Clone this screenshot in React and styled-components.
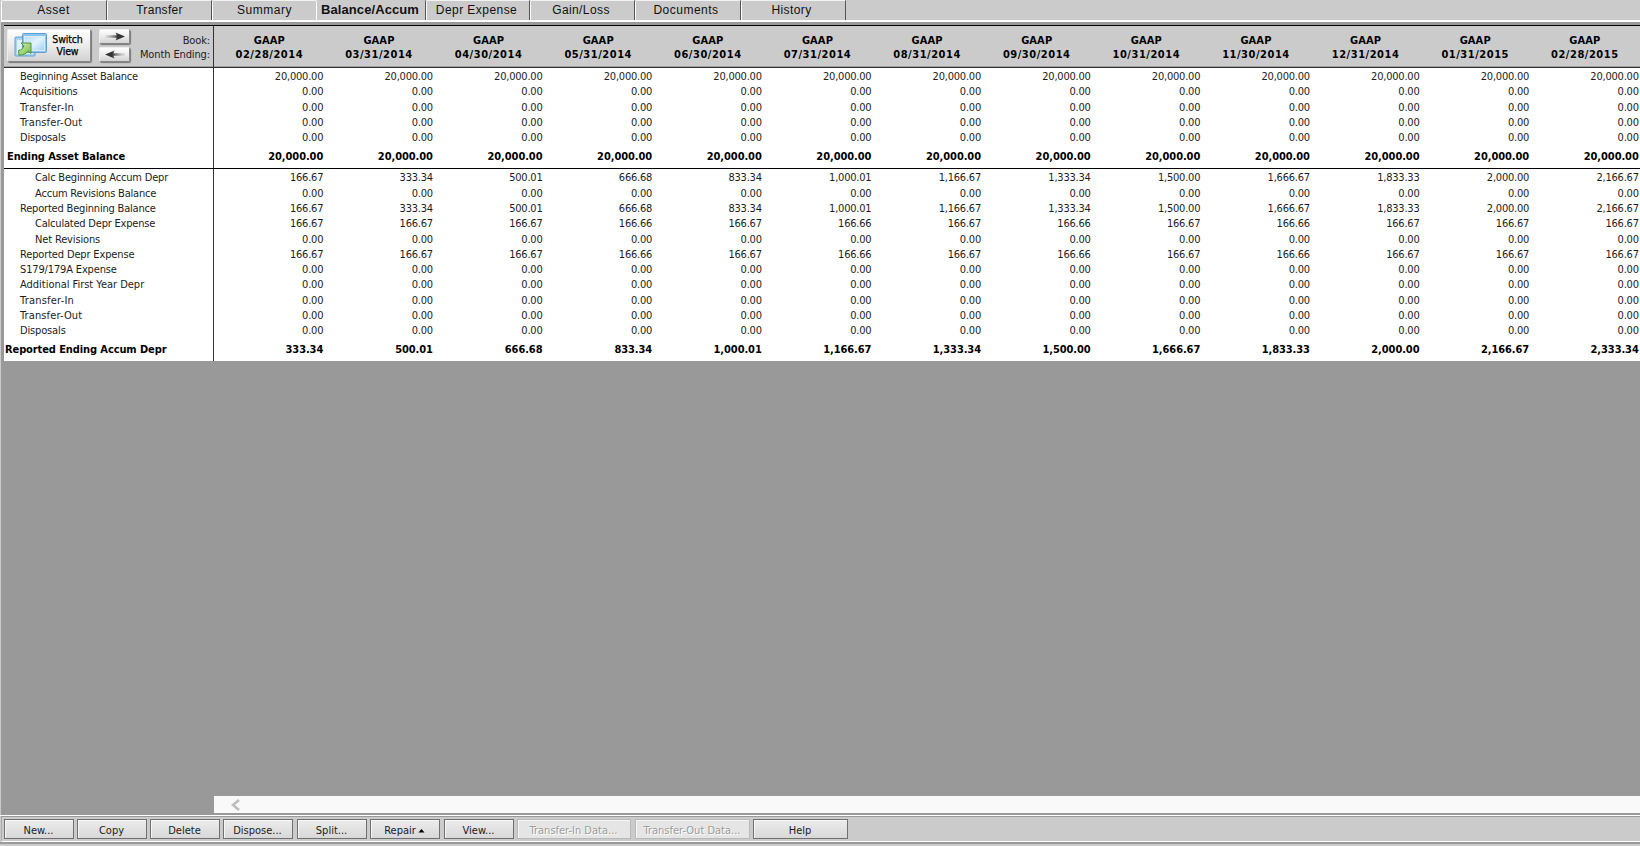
import React from 'react';
import styled, { createGlobalStyle, css } from 'styled-components';

const Global = createGlobalStyle`
  *, *::before, *::after { box-sizing: border-box; }
  html, body { margin: 0; padding: 0; overflow: hidden; background: #ccc; }
`;

const uiFont = css`
  font-family: 'DejaVu Sans Condensed', 'DejaVu Sans', sans-serif;
  font-stretch: 75%;
`;

const Window = styled.div`
  ${uiFont}
  width: 1640px;
  height: 846px;
  display: flex;
  flex-direction: column;
  background: #cbcbcb;
  color: #111;
  font-size: 11px;
  overflow: hidden;
`;

const TabBar = styled.nav`
  display: flex;
  height: 20px;
  flex: none;
  padding-left: 1px;
`;

const Tab = styled.div`
  width: ${(p) => p.$width}px;
  height: 20px;
  flex: none;
  padding-right: ${(p) => p.$inset}px;
  border-left: 1px solid #fff;
  border-top: 1px solid ${(p) => (p.$active ? '#cbcbcb' : '#f2f2f2')};
  border-right: ${(p) => (p.$beforeActive ? '0' : '1px solid #555')};
  border-top-left-radius: 2px;
  text-align: center;
  font-family: 'Liberation Sans', Arial, sans-serif;
  font-stretch: normal;
  font-size: ${(p) => (p.$active ? 13 : 12)}px;
  font-weight: ${(p) => (p.$active ? 700 : 400)};
  letter-spacing: ${(p) => p.$spacing}px;
  line-height: 18px;
  white-space: nowrap;
  color: #111;
`;

const Workspace = styled.main`
  display: flex;
  flex-direction: column;
  height: 795px;
  flex: none;
  margin-left: 1px;
  border-top: 2px solid #fff;
  background: #999;
`;

const Sheet = styled.section`
  margin: 3px 0 0 3px;
  border-top: 1px solid #000;
  background: #fff;
  overflow: hidden;
`;

const HeaderRow = styled.div`
  display: flex;
  height: 42px;
  background: #cbcbcb;
  border-bottom: 1px solid #333;
  box-shadow: inset 0 -1px #a0a0a0;
`;

const HeaderTools = styled.div`
  display: flex;
  width: 210px;
  flex: none;
  padding: 3px 3px 0 3px;
  border-right: 1px solid #333;
`;

const raised = css`
  border: 1px solid #888;
  border-top-color: #eee;
  border-left-color: #eee;
  border-radius: 2px;
  background: linear-gradient(#fefefe, #ececec 50%, #d2d2d2);
  box-shadow: 1px 1px 1px #777;
`;

const SwitchButton = styled.button`
  ${raised}
  ${uiFont}
  display: flex;
  align-items: center;
  width: 84px;
  height: 33px;
  padding: 0 5px 1px 6px;
  gap: 2px;
  color: #000;
  font-size: 10.5px;
  font-weight: 400;
  line-height: 12px;
  -webkit-text-stroke: 0.25px #000;
`;

const SwitchLabel = styled.span`
  flex: 1;
  text-align: center;
  letter-spacing: -0.15px;
`;

const ArrowStack = styled.div`
  display: flex;
  flex-direction: column;
  gap: 3px;
  margin: 0 0 0 8px;
`;

const ArrowButton = styled.button`
  ${raised}
  display: flex;
  align-items: center;
  justify-content: center;
  width: 31px;
  height: 15px;
  padding: 0;
`;

const HeaderCaption = styled.div`
  flex: 1;
  padding-top: 4.5px;
  text-align: right;
  white-space: nowrap;
  line-height: 14px;
  font-size: 11px;
  letter-spacing: -0.12px;
  color: #222;
`;

const Columns = styled.div`
  display: grid;
  grid-template-columns: repeat(13, 109.64px);
  flex: 1;
  overflow: hidden;
`;

const ColumnHead = styled.div`
  padding: 7.5px 0 0 1px;
  text-align: center;
  font-weight: 700;
  line-height: 14px;
  letter-spacing: 0.1px;
  color: #000;
`;

const MonthEnding = styled.div`
  letter-spacing: 0.52px;
`;

const Row = styled.div`
  display: flex;
  height: ${(p) => p.$height}px;
  line-height: ${(p) => p.$line}px;
  font-weight: ${(p) => (p.$total ? 700 : 400)};
  color: ${(p) => (p.$total ? '#000' : '#1c1c1c')};
  border-bottom: ${(p) => (p.$ruled ? '1px solid #000' : '0')};
`;

const RowLabel = styled.div`
  width: 210px;
  flex: none;
  padding-left: ${(p) => p.$indent}px;
  border-right: 1px solid #333;
  letter-spacing: ${(p) => p.$spacing}px;
  white-space: nowrap;
`;

const Amount = styled.div`
  padding-right: 0.4px;
  text-align: right;
  letter-spacing: ${(p) => (p.$total ? -0.08 : -0.22)}px;
`;

const Scrollbar = styled.div`
  display: flex;
  align-items: center;
  height: 17px;
  margin: auto 0 2px 213px;
  padding-left: 16px;
  background: #f9f9f9;
`;

const CommandBar = styled.footer`
  display: flex;
  height: 26px;
  flex: none;
  margin-left: 1px;
  padding: 2px 0 0 2px;
  border-top: 1px solid #999;
  border-left: 1px solid #aaa;
  border-bottom: 1px solid #fff;
  background: #cbcbcb;
`;

const Divider = styled.div`
  height: ${(p) => p.$size}px;
  flex: none;
  background: ${(p) => p.$color};
`;

const Command = styled.button`
  ${uiFont}
  display: flex;
  align-items: center;
  justify-content: center;
  width: ${(p) => p.$width}px;
  height: 20px;
  flex: none;
  margin-right: ${(p) => p.$gap}px;
  padding: 2px 1px 0 0;
  border: 1px solid #707070;
  border-radius: 0;
  background: linear-gradient(#ececec, #d8d8d8);
  box-shadow: inset 1px 1px #f6f6f6;
  color: #1c1c1c;
  font-size: 11px;
  white-space: nowrap;

  &:disabled {
    border-color: #b9b9b9;
    background: #e5e5e5;
    color: #9c9c9c;
    text-shadow: 1px 1px #fff;
  }
`;

const tabs = [
  ['Asset', 106, 0.5, 1],
  ['Transfer', 105, 0.3, 0],
  ['Summary', 104, 0.5, 0],
  ['Balance/Accum', 110, 0.08, 2],
  ['Depr Expense', 104, 0.45, 3],
  ['Gain/Loss', 105, 0.4, 3],
  ['Documents', 106, 0.5, 4],
  ['History', 105, 0.4, 4],
];

const months = [
  '02/28/2014', '03/31/2014', '04/30/2014', '05/31/2014', '06/30/2014', '07/31/2014', '08/31/2014',
  '09/30/2014', '10/31/2014', '11/30/2014', '12/31/2014', '01/31/2015', '02/28/2015',
];

const fill = (v) => months.map(() => v);
const zero = fill('0.00');
const balance = fill('20,000.00');
const accumulated = [
  '166.67', '333.34', '500.01', '666.68', '833.34', '1,000.01', '1,166.67', '1,333.34',
  '1,500.00', '1,666.67', '1,833.33', '2,000.00', '2,166.67', '2,333.34',
];
const opening = accumulated.slice(0, 13);
const closing = accumulated.slice(1);
const expense = [
  '166.67', '166.67', '166.67', '166.66', '166.67', '166.66', '166.67',
  '166.66', '166.67', '166.66', '166.67', '166.67', '166.67',
];

const rows = [
  { label: 'Beginning Asset Balance', height: 16, values: balance, spacing: -0.2 },
  { label: 'Acquisitions', height: 15, values: zero },
  { label: 'Transfer-In', height: 16, values: zero, spacing: 0.22 },
  { label: 'Transfer-Out', height: 15, values: zero, spacing: 0.12 },
  { label: 'Disposals', height: 15, values: zero },
  { label: 'Ending Asset Balance', height: 24, line: 23, values: balance, total: true, indent: 3, ruled: true },
  { label: 'Calc Beginning Accum Depr', height: 16, values: opening, indent: 31, spacing: -0.19 },
  { label: 'Accum Revisions Balance', height: 16, values: zero, indent: 31, spacing: -0.19 },
  { label: 'Reported Beginning Balance', height: 15, values: opening, spacing: -0.19 },
  { label: 'Calculated Depr Expense', height: 15, values: expense, indent: 31, spacing: -0.21 },
  { label: 'Net Revisions', height: 16, values: zero, indent: 31 },
  { label: 'Reported Depr Expense', height: 15, values: expense },
  { label: 'S179/179A Expense', height: 15, values: zero },
  { label: 'Additional First Year Depr', height: 15, values: zero, spacing: -0.02 },
  { label: 'Transfer-In', height: 16, values: zero, spacing: 0.22 },
  { label: 'Transfer-Out', height: 15, values: zero, spacing: 0.12 },
  { label: 'Disposals', height: 15, values: zero },
  { label: 'Reported Ending Accum Depr', height: 23, line: 23, values: closing, total: true, indent: 1 },
];

const commands = [
  { label: 'New...', width: 70, gap: 3 },
  { label: 'Copy', width: 70, gap: 3 },
  { label: 'Delete', width: 70, gap: 3 },
  { label: 'Dispose...', width: 70, gap: 4 },
  { label: 'Split...', width: 70, gap: 3 },
  { label: 'Repair', width: 70, gap: 4, menu: true },
  { label: 'View...', width: 70, gap: 3 },
  { label: 'Transfer-In Data...', width: 114, gap: 4, disabled: true },
  { label: 'Transfer-Out Data...', width: 115, gap: 3, disabled: true },
  { label: 'Help', width: 95, gap: 0 },
];

const WindowsIcon = () => (
  <svg width="34" height="27" viewBox="0 0 34 27">
    <defs>
      <linearGradient id="pane" x1="0" y1="0" x2="1" y2="1">
        <stop offset="0" stopColor="#b9dcf6" />
        <stop offset=".5" stopColor="#e3f3fd" />
        <stop offset="1" stopColor="#9ccff2" />
      </linearGradient>
      <linearGradient id="leaf" x1="0" y1="0" x2="1" y2="1">
        <stop offset="0" stopColor="#d5f0b4" />
        <stop offset="1" stopColor="#72bd45" />
      </linearGradient>
    </defs>
    <rect x="1" y="5" width="20" height="19" rx="1" fill="#a9d4f3" stroke="#5e9fd0" />
    <rect x="3" y="8" width="16" height="14" fill="#dff1fc" />
    <rect x="8.500" y="1.500" width="24" height="19" rx="1" fill="#8fc4ec" stroke="#5e9fd0" />
    <rect x="10.500" y="4.500" width="20" height="14" fill="url(#pane)" stroke="#d5ecfb" />
    <path d="M7 11h10v10.500l-2.800-2.600c-1.700 2.600-4.500 4.300-9.200 4.300l-.5-4.800c2.800 0 4.300-1.700 5.300-4.600z" fill="url(#leaf)" stroke="#4f9636" strokeLinejoin="round" />
  </svg>
);

const Arrow = ({ left }) => (
  <svg width="22" height="9" viewBox="0 0 22 9">
    <defs>
      <linearGradient id="shaft" x1="0" x2="1">
        <stop offset="0" stopColor="#bbb" stopOpacity=".3" />
        <stop offset=".65" stopColor="#333" />
      </linearGradient>
    </defs>
    <path d="M1 3.200h11.500L11.500.5l9.500 4-9.500 4 1-2.700H1z" fill="url(#shaft)" transform={left ? 'matrix(-1 0 0 1 22 0)' : undefined} />
  </svg>
);

export default function App() {
  return (
    <>
      <Global />
      <Window>
        <TabBar>
          {tabs.map(([name, width, spacing, inset], i) => (
            <Tab key={name} $width={width} $spacing={spacing} $inset={inset} $active={i === 3} $beforeActive={i === 2}>
              {name}
            </Tab>
          ))}
        </TabBar>
        <Workspace>
          <Sheet>
            <HeaderRow>
              <HeaderTools>
                <SwitchButton>
                  <WindowsIcon />
                  <SwitchLabel>Switch<br />View</SwitchLabel>
                </SwitchButton>
                <ArrowStack>
                  <ArrowButton aria-label="Next"><Arrow /></ArrowButton>
                  <ArrowButton aria-label="Previous"><Arrow left /></ArrowButton>
                </ArrowStack>
                <HeaderCaption>Book:<br />Month Ending:</HeaderCaption>
              </HeaderTools>
              <Columns>
                {months.map((m) => (
                  <ColumnHead key={m}>GAAP<MonthEnding>{m}</MonthEnding></ColumnHead>
                ))}
              </Columns>
            </HeaderRow>
            {rows.map((r, i) => (
              <Row
                key={i}
                $height={r.height}
                $line={r.line ?? (r.height === 16 ? 17 : 15)}
                $total={r.total}
                $ruled={r.ruled}
              >
                <RowLabel $indent={r.indent ?? 16} $spacing={r.spacing ?? (r.total ? -0.1 : -0.15)}>{r.label}</RowLabel>
                <Columns>
                  {r.values.map((v, c) => <Amount key={c} $total={r.total}>{v}</Amount>)}
                </Columns>
              </Row>
            ))}
          </Sheet>
          <Scrollbar>
            <svg width="11" height="12" viewBox="0 0 11 12">
              <path d="M9 1 3 6l6 5" fill="none" stroke="#bdbdbd" strokeWidth="2.600" />
            </svg>
          </Scrollbar>
        </Workspace>
        <Divider $size={1} $color="#fff" />
        <CommandBar>
          {commands.map((c) => (
            <Command key={c.label} $width={c.width} $gap={c.gap} disabled={c.disabled}>
              {c.label}
              {c.menu && (
                <svg width="9" height="5" viewBox="0 0 9 5"><path d="M2.500 4.500h6l-3-3.500z" fill="#000" /></svg>
              )}
            </Command>
          ))}
        </CommandBar>
        <Divider $size={2} $color="#999" />
      </Window>
    </>
  );
}
